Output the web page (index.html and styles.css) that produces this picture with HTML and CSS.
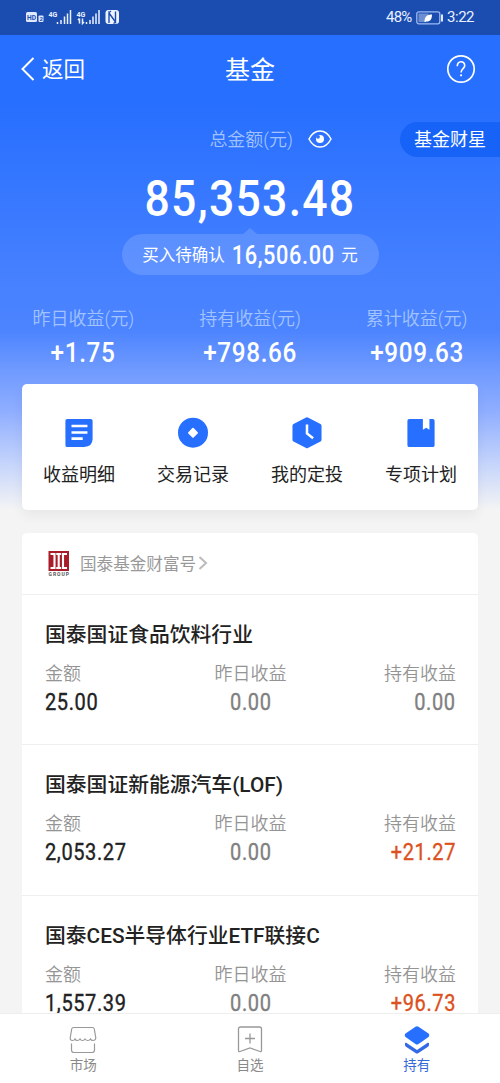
FILE: index.html
```html
<!DOCTYPE html>
<html lang="zh-CN">
<head>
<meta charset="utf-8">
<title>基金</title>
<link rel="stylesheet" href="styles.css">
</head>
<body>
<div class="app">
  <header class="status">
    <svg class="status-icons" width="100" height="20" viewBox="0 0 100 20">
      <rect x="0" y="4" width="11" height="10" rx="1.5" fill="#dfe9ff"/>
      <text x="1" y="12" class="hd" textLength="9" lengthAdjust="spacingAndGlyphs">HD</text>
      <rect x="12.500" y="7.500" width="5" height="6.500" rx="1" fill="#dfe9ff"/>
      <text x="13.500" y="13" class="tiny-dark">2</text>
      <text x="22.500" y="8.500" class="gen">4G</text>
      <path d="M31.500 16V14M35 16v-4M38.500 16V8.500M41.500 16V5.500M44.500 16V2" class="bars"/>
      <text x="50.500" y="8.500" class="gen">4G</text>
      <path d="M53.500 10.500v5M52 12l1.500-1.500M56.500 10.500v5l1.500-1.500M60.500 16v-2M64 16v-4M67 16V8.500M70 16V5.500M73 16V2" class="bars"/>
      <rect x="79.500" y="2" width="13.500" height="14" rx="3" fill="#eef4ff"/>
      <path d="M83 15V5l6.500 9V3.500M83 4.500l2-1.500M89.500 14l-2 1.500" fill="none" stroke="#1b4bae" stroke-width="1.400"/>
    </svg>
    <div class="status-right">
      <span class="pct">48%</span>
      <svg width="28" height="14" viewBox="0 0 28 14">
        <rect x=".8" y=".8" width="23" height="12" rx="2" fill="none" stroke="#9db9f3" stroke-width="1.300"/>
        <rect x="2.500" y="2.500" width="10" height="8.600" fill="#6d8fd2"/>
        <path d="M8.500 11c0-5 2-7.500 7.500-7.500 0 5-2 7.500-5.500 6.500L9.500 11z" fill="#fff"/>
        <path d="M26 3.500v7" stroke="#dfe9ff" stroke-width="2"/>
      </svg>
      <span class="clock">3:22</span>
    </div>
  </header>

  <section class="hero">
    <nav class="titlebar">
      <div class="back">
        <svg width="14" height="24" viewBox="0 0 14 24"><path d="M12.500 1 1.500 12l11 11" fill="none" stroke="#fff" stroke-width="2"/></svg>
        <span>返回</span>
      </div>
      <h1>基金</h1>
      <svg class="help" width="30" height="30" viewBox="0 0 30 30">
        <circle cx="15" cy="15" r="13.200" fill="none" stroke="#fff" stroke-width="1.700"/>
        <path d="M11.300 12.300c0-6 7.400-6 7.400-.6 0 3-3.600 3-3.600 6.800" fill="none" stroke="#fff" stroke-width="1.600"/>
        <circle cx="15.100" cy="21.300" r="1.100" fill="#fff"/>
      </svg>
    </nav>
    <div class="total-label">
      <span class="muted">总金额(元)</span>
      <svg width="24" height="20" viewBox="0 0 24 20">
        <path d="M1 10C6.500-.7 17.500-.7 23 10 17.500 20.700 6.500 20.700 1 10z" fill="none" stroke="#fff" stroke-width="1.500"/>
        <circle cx="12" cy="10" r="4" fill="#fff"/><circle cx="10" cy="7.800" r="1.900" fill="#2f73ff"/>
      </svg>
      <a class="star">基金财星</a>
    </div>
    <div class="total num">85,353.48</div>
    <div class="pending"><span>买入待确认</span><b class="num">16,506.00</b><span>元</span></div>
    <div class="stats">
      <div><span class="muted">昨日收益(元)</span><b class="num">+1.75</b></div>
      <div><span class="muted">持有收益(元)</span><b class="num">+798.66</b></div>
      <div><span class="muted">累计收益(元)</span><b class="num">+909.63</b></div>
    </div>
  </section>

  <section class="actions">
    <div>
      <svg width="32" height="34" viewBox="0 0 32 34"><path d="M3.500 2h25q2 0 2 2v19.500q0 8-9 8.500h-18q-2 0-2-2V4q0-2 2-2z" fill="#276fff"/><path d="M8 9.500h17M8 16.500h17M8 23h12" stroke="#fff" stroke-width="2.800"/></svg>
      <span>收益明细</span>
    </div>
    <div>
      <svg width="32" height="34" viewBox="0 0 32 34"><circle cx="16" cy="16.700" r="16" fill="#276fff"/><path d="m16 12.500 4.300 4.300-4.300 4.300-4.300-4.300z" fill="#fff" stroke="#fff" stroke-width="2" stroke-linejoin="round"/></svg>
      <span>交易记录</span>
    </div>
    <div>
      <svg width="32" height="34" viewBox="0 0 32 34"><path d="m16 2.300 13.500 7v15l-13.500 7-13.500-7v-15z" fill="#276fff" stroke="#276fff" stroke-width="4" stroke-linejoin="round"/><path d="M16 8v9.500l6.500 5" fill="none" stroke="#fff" stroke-width="2.700"/></svg>
      <span>我的定投</span>
    </div>
    <div>
      <svg width="32" height="34" viewBox="0 0 32 34"><path d="M3.500 2H18v11.500l3.500-2 3.500 2V2h3.500q2 0 2 2v26q0 2-2 2h-25q-2 0-2-2V4q0-2 2-2z" fill="#276fff"/></svg>
      <span>专项计划</span>
    </div>
  </section>

  <section class="funds">
    <div class="brand">
      <svg width="22" height="27" viewBox="0 0 22 27">
        <rect x=".5" y="1" width="20.500" height="20" fill="#a91d2b"/>
        <path d="M2.500 4h4v14h-4M19 4h-4v14h4M8.200 4h5M8.200 18h5M10.700 4v14" fill="none" stroke="#fff" stroke-width="2.100"/>
        <text x=".5" y="26.300" class="group" textLength="20.500">GROUP</text>
      </svg>
      <span>国泰基金财富号</span>
      <svg width="10" height="14" viewBox="0 0 10 14"><path d="m1.500 1 6.500 6-6.500 6" fill="none" stroke="#bbb" stroke-width="2"/></svg>
    </div>
    <article class="fund">
      <h2>国泰国证食品饮料行业</h2>
      <div class="cols">
        <div><span>金额</span><b class="num">25.00</b></div>
        <div><span>昨日收益</span><b class="num flat">0.00</b></div>
        <div><span>持有收益</span><b class="num flat">0.00</b></div>
      </div>
    </article>
    <article class="fund">
      <h2>国泰国证新能源汽车(LOF)</h2>
      <div class="cols">
        <div><span>金额</span><b class="num">2,053.27</b></div>
        <div><span>昨日收益</span><b class="num flat">0.00</b></div>
        <div><span>持有收益</span><b class="num up">+21.27</b></div>
      </div>
    </article>
    <article class="fund">
      <h2>国泰CES半导体行业ETF联接C</h2>
      <div class="cols">
        <div><span>金额</span><b class="num">1,557.39</b></div>
        <div><span>昨日收益</span><b class="num flat">0.00</b></div>
        <div><span>持有收益</span><b class="num up">+96.73</b></div>
      </div>
    </article>
  </section>

  <footer class="tabs">
    <div>
      <svg width="28" height="28" viewBox="0 0 28 28" fill="none" stroke="#999" stroke-width="1.200"><path d="M4.500 1.500h19q1.500 0 1.800 1.500l1.500 9q-.3 2.500-2.800 2.500-2 0-2.500-1.500-1 1.500-2.700 1.500T16 13q-.8 1.500-2.500 1.500T11 13q-1 1.500-2.700 1.500T6 13q-.8 1.500-2.500 1.500-2.500 0-2.300-2.500L2.700 3q.3-1.500 1.800-1.500zM2.500 17.500V24q0 2.500 2.500 2.500h18q2.500 0 2.500-2.500v-6.500"/></svg>
      <span>市场</span>
    </div>
    <div>
      <svg width="28" height="28" viewBox="0 0 28 28" fill="none" stroke="#999" stroke-width="1.300"><path d="M4.500 1h19q2 0 2 2v21.500q0 1.500-1.500 1L14 22 4 25.500q-1.500.5-1.500-1V3q0-2 2-2zM14 7.500v10M9 12.500h10"/></svg>
      <span>自选</span>
    </div>
    <div class="active">
      <svg width="28" height="28" viewBox="0 0 28 28"><path d="M12.500.8 2.500 7.500q-1.500 1.700 0 3.400l10 7.200q1.500 1 3 0l10-7.200q1.500-1.700 0-3.400L15.500.8q-1.500-.9-3 0z" fill="#276fff"/><path d="M2 17.300q0-1 1.300-.5L14 24l10.700-7.200q1.300-.5 1.300.5v1.700q0 1-1 1.700l-9.500 6.300q-1.500 1-3 0L3 20.700q-1-.7-1-1.700z" fill="#3569e6"/></svg>
      <span>持有</span>
    </div>
  </footer>
</div>
</body>
</html>
```
FILE: styles.css
```css
* { box-sizing: border-box; }
body { margin: 0; font-family: Roboto, "Noto Sans CJK SC", sans-serif; background: #f4f4f4; }
h1, h2 { margin: 0; font-weight: 400; }
svg { display: block; flex: none; }
.app { width: 500px; height: 1083px; display: flex; flex-direction: column; overflow: hidden; }
.num { font-family: Roboto, sans-serif; font-weight: 500; display: inline-block; transform: scaleX(.87); letter-spacing: .7px; white-space: nowrap; }

.status { height: 35px; flex: none; background: #1b4db1; display: flex; justify-content: space-between; padding: 8px 26px 0; color: #e9f1ff; }
.hd { font: 700 7px Roboto, sans-serif; fill: #1b4db1; }
.tiny-dark { font: 700 6px Roboto, sans-serif; fill: #1b4db1; }
.gen { font: 700 7px Roboto, sans-serif; fill: #e9f1ff; }
.bars { fill: none; stroke: #e9f1ff; stroke-width: 1.500; }
.status-right { display: flex; align-items: center; height: 19px; font-size: 15px; line-height: 19px; }
.pct { width: 30px; letter-spacing: -.8px; }
.clock { margin-left: 3px; letter-spacing: -.5px; }

.hero { flex: none; height: 477px; color: #fff; background: linear-gradient(#276fff 0, #276fff 70px, #4781ff 250px, #4c84ff 295px, #6f9aff 335px, #8eadff 375px, #c6d5fb 430px, #f4f4f4 475px); }
.titlebar { height: 68px; display: grid; grid-template-columns: 1fr auto 1fr; align-items: center; padding: 0 24px 0 21px; }
.back { display: flex; align-items: center; gap: 7px; font-size: 21.500px; line-height: 30px; }
.back span { padding-top: 2px; }
.titlebar h1 { font-size: 25px; line-height: 34px; margin-left: 3px; padding-top: 3px; }
.help { justify-self: end; }
.muted { color: #a2c3ff; font-size: 18px; font-weight: 350; line-height: 26px; padding-top: 1px; }
.total-label { height: 36px; margin-top: 18px; display: flex; align-items: center; justify-content: flex-end; gap: 15px; }
.star { width: 100px; height: 35px; margin-left: 53px; padding-left: 14px; border-radius: 18px 0 0 18px; background: #1763f8; font-size: 18px; line-height: 36px; white-space: nowrap; }
.total-label .muted { white-space: nowrap; }
.total { display: block; height: 60px; margin-top: 12px; text-align: center; font-size: 49.500px; line-height: 60px; transform: scaleX(.9); letter-spacing: 1.400px; }
.pending { position: relative; width: 257px; height: 41px; margin: 5px auto 0; border-radius: 21px; background: rgba(255,255,255,.15); display: flex; align-items: center; justify-content: center; font-size: 16.500px; line-height: 41px; white-space: nowrap; }
.pending span { padding-top: 2px; }
.pending::before { content: ""; position: absolute; left: 121px; top: -6px; border: 7px solid transparent; border-top: 0; border-bottom: 6px solid rgba(255,255,255,.15); }
.pending .num { font-size: 25px; margin: 0 -1px; padding-top: 1px; }
.stats { display: grid; grid-template-columns: repeat(3, 1fr); margin-top: 30px; text-align: center; }
.stats > div { display: flex; flex-direction: column; align-items: center; }
.stats .num { font-size: 27px; line-height: 34px; margin-top: 4px; transform: scaleX(.9); }

.actions { flex: none; position: relative; height: 126px; margin: -128px 22px 0; padding: 33px 0 0; display: grid; grid-template-columns: repeat(4, 1fr); background: #fff; border-radius: 5px; box-shadow: 0 6px 12px rgba(0,0,0,.05); color: #222; }
.actions > div { display: flex; flex-direction: column; align-items: center; }
.actions svg { width: 30px; height: 32px; }
.actions span { font-size: 18px; line-height: 26px; margin-top: 13px; }

.funds { margin: 23px 22px 0; flex: 1; min-height: 0; overflow: hidden; background: #fff; border-radius: 5px 5px 0 0; }
.brand { height: 60.500px; display: flex; align-items: center; padding-left: 26px; color: #999; font-size: 16.600px; }
.brand span { margin: 0 2px 0 10px; }
.group { font: 700 5px Roboto, sans-serif; fill: #555; }
.fund { height: 150.500px; padding: 25px 22px 0 23px; border-top: 1px solid #efefef; color: #222; }
.fund h2 { font-size: 20.800px; font-weight: 500; line-height: 30px; white-space: nowrap; }
.cols { display: grid; grid-template-columns: repeat(3, 1fr); margin-top: 11px; }
.cols > div { display: flex; flex-direction: column; align-items: flex-start; }
.cols > div:nth-child(2) { align-items: center; }
.cols > div:nth-child(3) { align-items: flex-end; }
.cols span { color: #949494; font-size: 18px; font-weight: 350; line-height: 26px; }
.cols .num { font-size: 23px; line-height: 28px; margin-top: 2px; transform-origin: left; font-weight: 400; -webkit-text-stroke: .35px currentColor; }
.cols > div:nth-child(2) .num { transform-origin: center; }
.cols > div:nth-child(3) .num { transform-origin: right; }
.cols .flat { color: #808080; }
.cols .up { color: #dc5120; }

.tabs { flex: none; height: 70px; display: grid; grid-template-columns: repeat(3, 1fr); background: #fff; border-top: 1px solid #eee; color: #888; position: relative; }
.tabs > div { display: flex; flex-direction: column; align-items: center; padding-top: 12px; }
.tabs span { font-size: 13.500px; line-height: 20px; margin-top: 1px; }
.tabs .active { color: #3569d8; }
```
